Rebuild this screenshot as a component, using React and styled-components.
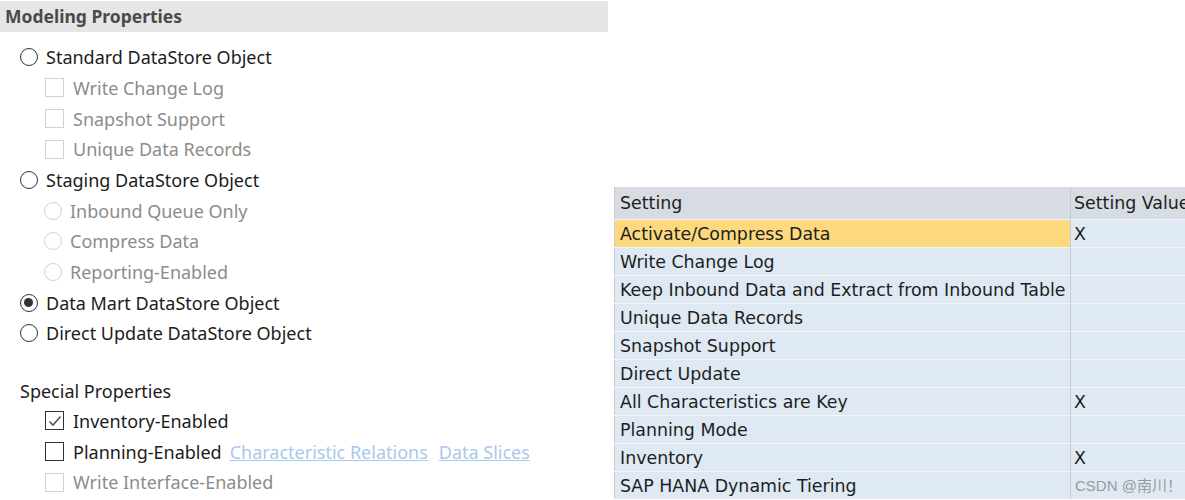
import React from "react";
import styled, { createGlobalStyle } from "styled-components";

const GlobalStyle = createGlobalStyle`
  body {
    margin: 0;
    background: #ffffff;
  }
`;

const modelingOptions = [
  { type: "radio", label: "Standard DataStore Object" },
  { type: "check", label: "Write Change Log", sub: true, disabled: true },
  { type: "check", label: "Snapshot Support", sub: true, disabled: true },
  { type: "check", label: "Unique Data Records", sub: true, disabled: true },
  { type: "radio", label: "Staging DataStore Object" },
  { type: "radio", label: "Inbound Queue Only", sub: true, disabled: true },
  { type: "radio", label: "Compress Data", sub: true, disabled: true },
  { type: "radio", label: "Reporting-Enabled", sub: true, disabled: true },
  { type: "radio", label: "Data Mart DataStore Object", checked: true },
  { type: "radio", label: "Direct Update DataStore Object" },
];

const settings = [
  { name: "Activate/Compress Data", value: "X", selected: true },
  { name: "Write Change Log", value: "" },
  { name: "Keep Inbound Data and Extract from Inbound Table", value: "" },
  { name: "Unique Data Records", value: "" },
  { name: "Snapshot Support", value: "" },
  { name: "Direct Update", value: "" },
  { name: "All Characteristics are Key", value: "X" },
  { name: "Planning Mode", value: "" },
  { name: "Inventory", value: "X" },
  { name: "SAP HANA Dynamic Tiering", value: "" },
];

const Check = () => (
  <svg width="14" height="12" viewBox="0 0 14 12">
    <path d="M1.5 6.5 L5 10 L12.5 1.5" fill="none" stroke="#555" strokeWidth="1.6" />
  </svg>
);

const Option = ({ type, label, sub, disabled, checked, children }) => (
  <OptionRow $sub={sub} $type={type}>
    {type === "radio" ? (
      <Radio $checked={checked} $disabled={disabled} $sub={sub} />
    ) : (
      <Box $disabled={disabled}>{checked && <Check />}</Box>
    )}
    <Label $disabled={disabled}>{label}</Label>
    {children}
  </OptionRow>
);

const App = () => {
  return (
    <Page>
      <GlobalStyle />
      <LeftPanel>
        <SectionHeader>Modeling Properties</SectionHeader>
        <OptionList>
          {modelingOptions.map((o) => (
            <Option key={o.label} {...o} />
          ))}
        </OptionList>
        <SpecialTitle>Special Properties</SpecialTitle>
        <OptionList $tight>
          <Option type="check" sub label="Inventory-Enabled" checked />
          <Option type="check" sub label="Planning-Enabled">
            <Links>
              <LinkText>Characteristic Relations</LinkText>
              <LinkText>Data Slices</LinkText>
            </Links>
          </Option>
          <Option type="check" sub label="Write Interface-Enabled" disabled />
        </OptionList>
      </LeftPanel>
      <TableWrap>
        <SettingsTable>
          <thead>
            <tr>
              <HeadCell style={{ width: 450 }}>Setting</HeadCell>
              <HeadCell $narrow>Setting Value</HeadCell>
            </tr>
          </thead>
          <tbody>
            {settings.map((s) => (
              <tr key={s.name}>
                <Cell $selected={s.selected}>{s.name}</Cell>
                <Cell $narrow>{s.value}</Cell>
              </tr>
            ))}
          </tbody>
        </SettingsTable>
        <Watermark>CSDN @南川！</Watermark>
      </TableWrap>
    </Page>
  );
};

const Page = styled.div`
  display: flex;
  align-items: flex-start;
  width: 1185px;
  height: 500px;
  overflow: hidden;
  font-family: "Noto Sans", "Open Sans", sans-serif;
`;

const LeftPanel = styled.div`
  width: 608px;
  flex-shrink: 0;
  padding-top: 1px;
`;

const SectionHeader = styled.div`
  height: 31px;
  line-height: 31px;
  background: #e6e6e6;
  padding-left: 5px;
  font-size: 17.5px;
  font-weight: 700;
  color: #4a4a4a;
`;

const OptionList = styled.div`
  display: flex;
  flex-direction: column;
  padding-top: ${(p) => (p.$tight ? "5px" : "10px")};
`;

const OptionRow = styled.div`
  display: flex;
  align-items: center;
  height: 30.67px;
  padding-left: ${(p) => (p.$sub ? (p.$type === "radio" ? "44px" : "45px") : "20px")};
  gap: ${(p) => (p.$sub && p.$type !== "radio" ? "9px" : "8px")};
`;

const Radio = styled.span`
  position: relative;
  box-sizing: border-box;
  width: 18px;
  height: 18px;
  border-radius: 50%;
  border: 1.5px solid ${(p) => (p.$disabled ? "#d2d2d2" : "#333333")};
  flex-shrink: 0;
  &::after {
    content: "";
    display: ${(p) => (p.$checked ? "block" : "none")};
    position: absolute;
    left: 3px;
    top: 3px;
    width: 9px;
    height: 9px;
    border-radius: 50%;
    background: #333333;
  }
`;

const Box = styled.span`
  box-sizing: border-box;
  width: 19px;
  height: 19px;
  border: 1.5px solid ${(p) => (p.$disabled ? "#d2d2d2" : "#333333")};
  display: flex;
  align-items: center;
  justify-content: center;
  flex-shrink: 0;
`;

const Label = styled.span`
  font-size: 18px;
  color: ${(p) => (p.$disabled ? "#8c8c8c" : "#1c1c1c")};
  white-space: nowrap;
`;

const SpecialTitle = styled.div`
  margin-top: 32px;
  padding-left: 20px;
  font-size: 18px;
  color: #1c1c1c;
  line-height: 20px;
`;

const Links = styled.span`
  display: flex;
  gap: 11px;
  margin-left: -1px;
`;

const LinkText = styled.span`
  font-size: 18px;
  color: #a9c8ee;
  text-decoration: underline;
  white-space: nowrap;
`;

const TableWrap = styled.div`
  position: relative;
  flex: 1;
  margin-top: 187px;
  margin-left: 6px;
  overflow: hidden;
`;

const SettingsTable = styled.table`
  border-collapse: collapse;
  width: 620px;
  table-layout: fixed;
  font-family: "DejaVu Sans", "Liberation Sans", sans-serif;
  font-size: 17.4px;
  color: #1e1e1e;
  border-left: 1px solid #c4ccd4;
`;

const HeadCell = styled.th`
  height: 32px;
  padding: 0 0 0 ${(p) => (p.$narrow ? "3px" : "5px")};
  text-align: left;
  font-weight: 400;
  background: #d6dce2;
  border-right: 1px solid #c4ccd4;
  white-space: nowrap;
  overflow: hidden;
`;

const Cell = styled.td`
  height: 27px;
  padding: 0 0 0 ${(p) => (p.$narrow ? "3px" : "5px")};
  background: ${(p) => (p.$selected ? "#fcd97d" : "#dfe9f3")};
  border-top: 1px solid #f2f6fa;
  border-right: 1px solid #c4ccd4;
  white-space: nowrap;
  overflow: hidden;
`;

const Watermark = styled.span`
  position: absolute;
  left: 461px;
  bottom: 4px;
  font-family: "Liberation Sans", "Noto Sans CJK SC", sans-serif;
  font-size: 15px;
  color: #9a9a9a;
`;

export default App;
